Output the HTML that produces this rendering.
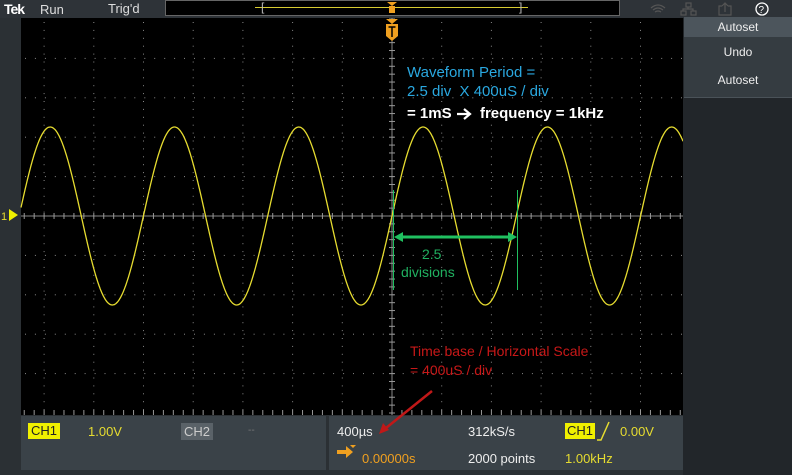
<!DOCTYPE html>
<html><head><meta charset="utf-8"><style>
*{margin:0;padding:0;box-sizing:border-box}
body{width:792px;height:475px;background:#2b3034;position:relative;overflow:hidden;font-family:"Liberation Sans","DejaVu Sans",sans-serif}
.t{position:absolute;white-space:nowrap}
</style></head><body>
<div style="position:absolute;left:0;top:0;width:792px;height:18px;background:#2e3338"></div>
<div class="t" style="left:4px;top:1px;color:#fff;font-weight:bold;font-size:14px;letter-spacing:-1px">Tek</div>
<div class="t" style="left:40px;top:2px;color:#ddd;font-size:13px">Run</div>
<div class="t" style="left:108px;top:1px;color:#ddd;font-size:13px">Trig'd</div>
<div style="position:absolute;left:165px;top:0;width:455px;height:16px;background:#000;border:1px solid #666"></div>
<div style="position:absolute;left:255px;top:7px;width:273px;height:1px;background:#d8cc30"></div>
<div class="t" style="left:261px;top:0px;color:#bbb;font-size:12px">[</div>
<div class="t" style="left:519px;top:0px;color:#bbb;font-size:12px">]</div>
<svg style="position:absolute;left:0;top:0" width="792" height="475">
<rect x="21" y="18" width="662" height="397" fill="#000"/>
<g id="grid"></g>
<path id="wave" fill="none" stroke="#e6dc30" stroke-width="1.3"/>
<path d="M387 2 h10 l-5 4z M389 6 h6 v7 h-6z" fill="#f0a020"/>
<path d="M386 19 h12 l-6 5z M386 24 h12 v12 l-6 5 l-6 -5z" fill="#f0a020"/>
<path d="M388.5 27 h7 M392 27 v10" stroke="#000" stroke-width="1.5"/>
<path d="M9 209 l9 6 l-9 6z" fill="#f0f000"/>
<text x="1" y="220" fill="#e6dc30" font-size="11" font-family="Liberation Sans">1</text>
<line x1="393.5" y1="190" x2="393.5" y2="290" stroke="#20c060" stroke-width="1"/>
<line x1="517.5" y1="190" x2="517.5" y2="290" stroke="#20c060" stroke-width="1"/>
<line x1="400" y1="237" x2="511" y2="237" stroke="#20c060" stroke-width="3"/>
<path d="M394 237 l9 -5 v10z M517 237 l-9 -5 v10z" fill="#20c060"/>
<g stroke="#555" fill="none" stroke-width="1.2">
<path d="M651 8 q7 -6 14 0 M653 10 q5 -4 10 0 M655 12 q3 -2 6 0"/>
<rect x="686" y="3" width="5" height="4"/><rect x="681" y="11" width="5" height="4"/><rect x="691" y="11" width="5" height="4"/><path d="M688 7 v2 M683 11 v-2 h10 v2"/>
<path d="M722 6 h-3 v9 h12 v-9 h-3 M725 12 v-9 M722 6 l3 -3 l3 3"/>
</g>
<circle cx="762" cy="9" r="6" fill="none" stroke="#fff" stroke-width="1.3"/>
<text x="758.5" y="13" fill="#fff" font-size="10" font-family="Liberation Sans">?</text>
</svg>
<div style="position:absolute;left:683px;top:18px;width:109px;height:457px;background:#22262a"></div>
<div style="position:absolute;left:684px;top:17px;width:108px;height:20px;background:#4c555c;color:#eee;font-size:12px;text-align:center;line-height:20px">Autoset</div>
<div style="position:absolute;left:684px;top:37px;width:108px;height:61px;background:#353c41;border-bottom:1px solid #4a5258"></div>
<div class="t" style="left:684px;top:45px;width:108px;text-align:center;color:#eee;font-size:12px">Undo</div>
<div class="t" style="left:684px;top:73px;width:108px;text-align:center;color:#eee;font-size:12px">Autoset</div>
<div class="t" style="left:407px;top:64px;color:#2aa8e0;font-size:15px">Waveform Period =</div>
<div class="t" style="left:407px;top:83px;color:#2aa8e0;font-size:15px">2.5 div &nbsp;X 400uS / div</div>
<div class="t" style="left:407px;top:105px;color:#fff;font-size:15px;font-weight:bold">= 1mS <span style="display:inline-block;width:20px"></span> frequency = 1kHz</div>
<svg style="position:absolute;left:455px;top:106px" width="20" height="16"><path d="M2 8 h13 M9 3 l6 5 l-6 5" stroke="#fff" stroke-width="2.2" fill="none"/></svg>
<div class="t" style="left:422px;top:246px;color:#20b060;font-size:14px">2.5</div>
<div class="t" style="left:401px;top:264px;color:#20b060;font-size:14px">divisions</div>
<div class="t" style="left:410px;top:343px;color:#c81818;font-size:14px">Time base / Horizontal Scale</div>
<div class="t" style="left:410px;top:362px;color:#c81818;font-size:14px">= 400uS / div</div>
<div style="position:absolute;left:21px;top:416px;width:305px;height:54px;background:#3a4248"></div>
<div style="position:absolute;left:329px;top:416px;width:354px;height:54px;background:#3a4248"></div>
<div class="t" style="left:28px;top:423px;background:#f0f000;color:#222;font-size:13px;padding:0 3px;line-height:16px">CH1</div>
<div class="t" style="left:88px;top:424px;color:#e6dc30;font-size:13px">1.00V</div>
<div class="t" style="left:181px;top:423px;background:#5a6268;color:#ccc;font-size:13px;padding:0 3px;line-height:17px">CH2</div>
<div class="t" style="left:248px;top:425px;color:#777;font-size:10px">--</div>
<div class="t" style="left:337px;top:424px;color:#eee;font-size:13px">400µs</div>
<div class="t" style="left:468px;top:424px;color:#eee;font-size:13px">312kS/s</div>
<div class="t" style="left:565px;top:423px;background:#f0f000;color:#222;font-size:13px;padding:0 2px;line-height:16px">CH1</div>
<svg style="position:absolute;left:596px;top:420px" width="16" height="22"><path d="M1 20 h4 l8 -18" stroke="#e6dc30" stroke-width="1.5" fill="none"/></svg>
<div class="t" style="left:620px;top:424px;color:#e6dc30;font-size:13px">0.00V</div>
<svg style="position:absolute;left:336px;top:444px" width="22" height="20"><path d="M1 6 h9 v-4 l7 6 l-7 6 v-4 h-9z" fill="#f0a020"/><path d="M14 1 h6 l-3 3z" fill="#f0a020"/></svg>
<div class="t" style="left:362px;top:451px;color:#f0a020;font-size:13px">0.00000s</div>
<div class="t" style="left:468px;top:451px;color:#eee;font-size:13px">2000 points</div>
<div class="t" style="left:565px;top:451px;color:#e6dc30;font-size:13px">1.00kHz</div>
<svg style="position:absolute;left:0;top:0" width="792" height="475">
<line x1="432" y1="391" x2="386" y2="428" stroke="#c01818" stroke-width="2.5"/>
<path d="M379 434 l4 -11 l6 7z" fill="#c01818"/>
</svg>
<script>
var g='',s='';
var vx=[];for(var k=-7;k<=6;k++){var x=392+k*49.7;if(x>22&&x<682)vx.push(x);}
var hy=[];for(var k=-5;k<=5;k++){hy.push(216+k*39.4);}
for(var i=0;i<vx.length;i++){var x=vx[i];for(var y=22;y<414;y+=7.9)g+='<rect x="'+(x-0.5)+'" y="'+y.toFixed(1)+'" width="1" height="1" fill="#888"/>';}
for(var j=1;j<hy.length-1;j++){var y=hy[j];for(var x=25;x<682;x+=9.94)g+='<rect x="'+x.toFixed(1)+'" y="'+(y-0.5)+'" width="1" height="1" fill="#888"/>';}
g+='<line x1="21" y1="216" x2="683" y2="216" stroke="#888" stroke-width="1"/>';
g+='<line x1="392" y1="18" x2="392" y2="415" stroke="#888" stroke-width="1"/>';
for(var x=392;x<683;x+=9.94)g+='<line x1="'+x+'" y1="213" x2="'+x+'" y2="219" stroke="#999"/>';
for(var x=392;x>21;x-=9.94)g+='<line x1="'+x+'" y1="213" x2="'+x+'" y2="219" stroke="#999"/>';
for(var y=216;y<415;y+=7.88)g+='<line x1="389" y1="'+y+'" x2="395" y2="'+y+'" stroke="#999"/>';
for(var y=216;y>18;y-=7.88)g+='<line x1="389" y1="'+y+'" x2="395" y2="'+y+'" stroke="#999"/>';
for(var x=392;x<683;x+=9.94)g+='<line x1="'+x+'" y1="410" x2="'+x+'" y2="415" stroke="#999"/>';
for(var x=392;x>21;x-=9.94)g+='<line x1="'+x+'" y1="410" x2="'+x+'" y2="415" stroke="#999"/>';
document.getElementById('grid').innerHTML=g;
for(var x=21;x<=683;x+=0.5){var y=216-89*Math.sin(2*Math.PI*(x-392)/124.3);s+=(x==21?'M':'L')+x+' '+y.toFixed(1);}
document.getElementById('wave').setAttribute('d',s);
</script>
</body></html>
